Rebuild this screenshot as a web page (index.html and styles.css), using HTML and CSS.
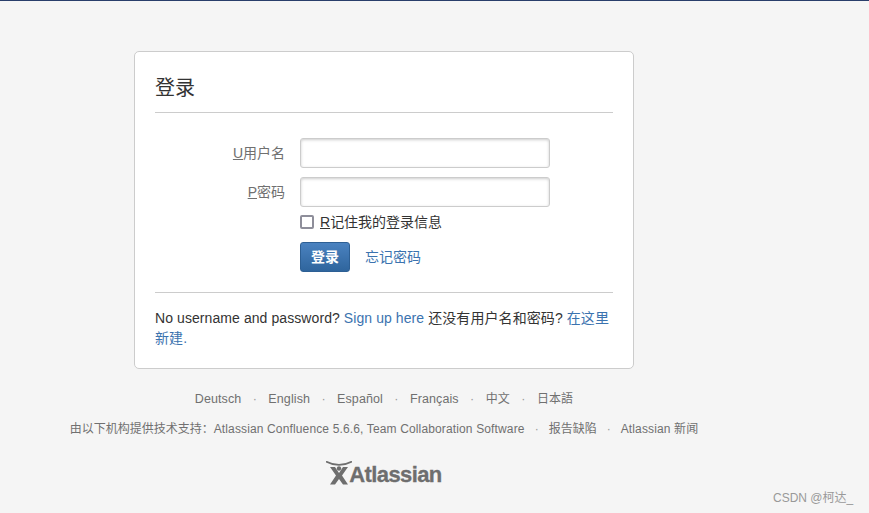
FILE: index.html
```html
<!DOCTYPE html>
<html lang="zh">
<head>
<meta charset="utf-8">
<title>登录</title>
<link rel="stylesheet" href="styles.css">
</head>
<body>
<main class="page">
  <section class="card">
    <h1 class="title">登录</h1>
    <form class="form">
      <div class="row">
        <label class="label" for="u"><u>U</u>用户名</label>
        <input class="input" id="u" type="text">
      </div>
      <div class="row">
        <label class="label" for="p"><u>P</u>密码</label>
        <input class="input" id="p" type="password">
      </div>
      <div class="remember">
        <span class="check"></span>
        <span class="remember-text"><u>R</u>记住我的登录信息</span>
      </div>
      <div class="actions">
        <button class="btn" type="button">登录</button>
        <a class="link forgot" href="#">忘记密码</a>
      </div>
    </form>
    <p class="signup">No username and password? <a class="link" href="#">Sign up here</a> 还没有用户名和密码? <a class="link" href="#">在这里</a><br><a class="link" href="#">新建</a><span class="link">.</span></p>
  </section>
  <nav class="langs">
    <a>Deutsch</a><i>·</i><a>English</a><i>·</i><a>Español</a><i>·</i><a>Français</a><i>·</i><a class="cjk">中文</a><i>·</i><a class="cjk">日本語</a>
  </nav>
  <div class="powered">
    <span>由以下机构提供技术支持：</span><span class="tech">Atlassian Confluence 5.6.6, Team Collaboration Software</span><i>·</i><a>报告缺陷</a><i>·</i><a class="tech">Atlassian 新闻</a>
  </div>
  <div class="logo">
    <svg class="logo-mark" width="26" height="24" viewBox="0 0 26 24">
      <path d="M0 .5C8 5 18 5 26 .5" fill="none" stroke="#6e6e6e" stroke-width="1.800"/>
      <circle cx="13" cy="7.500" r="2.200" fill="#6e6e6e"/>
      <path d="M4 6H9L13 12 17 6H22L16 14.500 22 23.500H17L13 18 9 23.500H4L10 14.500Z" fill="#6e6e6e"/>
    </svg>
    <span class="logo-text">Atlassian</span>
  </div>
  <div class="watermark">CSDN @柯达_</div>
</main>
</body>
</html>
```
FILE: styles.css
```css
* { box-sizing: border-box; }
html, body { margin: 0; height: 100%; }
body {
  background: #f5f5f5;
  border-top: 1px solid #293e6b;
  font-family: "Liberation Sans", "Noto Sans CJK SC", sans-serif;
  font-size: 14px;
  color: #333;
  overflow: hidden;
}
.page {
  position: relative;
  width: 768px;
  height: 512px;
  padding-top: 50px;
  display: flex;
  flex-direction: column;
  align-items: center;
}
.card {
  width: 500px;
  height: 318px;
  background: #fff;
  border: 1px solid #ccc;
  border-radius: 5px;
  padding: 20px;
}
.title {
  margin: 0;
  height: 41px;
  border-bottom: 1px solid #ccc;
  font-size: 20px;
  font-weight: 400;
  line-height: 33px;
  color: #333;
}
.form { padding-top: 25px; height: 180px; border-bottom: 1px solid #ccc; }
.row { display: flex; align-items: center; gap: 15px; height: 30px; margin-bottom: 9px; }
.label { width: 130px; text-align: right; color: #707070; padding-bottom: 2px; }
.input {
  width: 250px;
  height: 30px;
  border: 1px solid #ccc;
  border-radius: 3px;
  background: #fff;
  box-shadow: inset 0 1px 3px #ccc;
  padding: 0 4px;
}
.remember {
  display: flex;
  align-items: center;
  gap: 6px;
  margin-left: 145px;
  height: 20px;
  margin-top: -4px;
  color: #333;
}
.remember-text { padding-bottom: 2px; }
.check {
  width: 14px;
  height: 14px;
  border: 2px solid #8e8e9a;
  border-radius: 2px;
  background: #fff;
}
.actions { display: flex; align-items: center; gap: 15px; margin: 10px 0 0 145px; height: 30px; }
.btn {
  width: 50px;
  height: 30px;
  padding: 0 0 2px;
  border: 1px solid #2d5f94;
  border-radius: 3px;
  background: linear-gradient(#4a82c0, #2f659d);
  color: #fff;
  font: 700 14px "Liberation Sans", "Noto Sans CJK SC", sans-serif;
}
.forgot { padding-bottom: 2px; }
.link { color: #3b73af; text-decoration: none; }
.signup { margin: 15px 0 0; line-height: 20px; color: #333; letter-spacing: 0.08px; }
.langs, .powered { display: flex; justify-content: center; color: #707070; }
.langs { margin-top: 20px; line-height: 20px; font-size: 12.5px; letter-spacing: 0.1px; }
.langs .cjk { font-size: 12px; letter-spacing: 0.1px; }
.powered { margin-top: 10px; line-height: 20px; font-size: 12px; }
.tech { letter-spacing: 0.14px; }
.langs i, .powered i { font-style: normal; text-align: center; color: #999; }
.langs i { width: 27px; }
.powered i { width: 24px; }
.logo { display: flex; align-items: flex-end; margin-top: 22px; height: 26px; color: #6e6e6e; }
.logo-mark { margin-right: -3px; margin-bottom: 2px; }
.logo-text { font-size: 22px; font-weight: 700; line-height: 24px; letter-spacing: -0.6px; -webkit-text-stroke: 0.3px #6e6e6e; }
.watermark { position: absolute; left: 773px; top: 489px; width: 96px; color: #999; font-size: 12px; line-height: 16px; white-space: nowrap; }
```
